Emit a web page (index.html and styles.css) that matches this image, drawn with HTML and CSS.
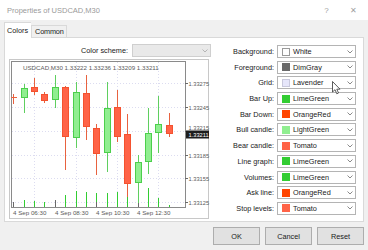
FILE: index.html
```html
<!DOCTYPE html>
<html>
<head>
<meta charset="utf-8">
<link rel="stylesheet" href="styles.css">
</head>
<body>
<div class="titlebar">
  <span class="title">Properties of USDCAD,M30</span>
  <span class="tb-btn">?</span>
  <span class="tb-btn">✕</span>
</div>
<div class="tabs">
  <div class="tab active">Colors</div>
  <div class="tab">Common</div>
</div>
<div class="panel">
  <div class="left">
    <div class="scheme-row">
      <span>Color scheme:</span>
      <div class="combo disabled"><svg class="chev" width="6" height="4" viewBox="0 0 6 4"><polyline points="0.5,0.5 3,3 5.5,0.5" fill="none" stroke="#b5b5b5" stroke-width="1"/></svg></div>
    </div>
    <svg class="chart" viewBox="9 59 201 160" width="201" height="160">
      <rect x="9.5" y="59.5" width="199" height="159" fill="#fff" stroke="#c8c8c8"/>
      <g stroke="#dcdcf0" stroke-dasharray="1 2" stroke-width="1">
        <line x1="12" y1="83.5" x2="185" y2="83.5"/>
        <line x1="12" y1="107.5" x2="185" y2="107.5"/>
        <line x1="12" y1="131.5" x2="185" y2="131.5"/>
        <line x1="12" y1="155.5" x2="185" y2="155.5"/>
        <line x1="12" y1="178.5" x2="185" y2="178.5"/>
        <line x1="12" y1="202.5" x2="185" y2="202.5"/>
        <line x1="34.5" y1="62" x2="34.5" y2="207"/>
        <line x1="76.5" y1="62" x2="76.5" y2="207"/>
        <line x1="117.5" y1="62" x2="117.5" y2="207"/>
        <line x1="158.5" y1="62" x2="158.5" y2="207"/>
      </g>
      <rect x="11.5" y="61.5" width="174" height="146" fill="none" stroke="#8a8a8a"/>
      <text class="ctitle" x="23" y="70">USDCAD,M30  1.33222 1.33236 1.33209 1.33211</text>
      <g stroke="#32cd32" stroke-width="1">
        <line x1="13.5" y1="202" x2="13.5" y2="207"/>
        <line x1="24.5" y1="200" x2="24.5" y2="207"/>
        <line x1="34.5" y1="201" x2="34.5" y2="207"/>
        <line x1="44.5" y1="202" x2="44.5" y2="207"/>
        <line x1="55.5" y1="200" x2="55.5" y2="207"/>
        <line x1="65.5" y1="195" x2="65.5" y2="207"/>
        <line x1="76.5" y1="191" x2="76.5" y2="207"/>
        <line x1="86.5" y1="192" x2="86.5" y2="207"/>
        <line x1="96.5" y1="193" x2="96.5" y2="207"/>
        <line x1="107.5" y1="193" x2="107.5" y2="207"/>
        <line x1="117.5" y1="192" x2="117.5" y2="207"/>
        <line x1="127.5" y1="187" x2="127.5" y2="207"/>
        <line x1="138.5" y1="188" x2="138.5" y2="207"/>
        <line x1="148.5" y1="188" x2="148.5" y2="207"/>
        <line x1="158.5" y1="198" x2="158.5" y2="207"/>
        <line x1="169.5" y1="205" x2="169.5" y2="207"/>
      </g>
      <g stroke="#696969" stroke-width="1">
        <line x1="13.5" y1="202" x2="13.5" y2="207"/>
        <line x1="55.5" y1="200" x2="55.5" y2="207"/>
        <line x1="96.5" y1="202" x2="96.5" y2="207"/>
        <line x1="138.5" y1="202" x2="138.5" y2="207"/>
        <line x1="185" y1="83.5" x2="188" y2="83.5"/>
        <line x1="185" y1="107.5" x2="188" y2="107.5"/>
        <line x1="185" y1="131.5" x2="188" y2="131.5"/>
        <line x1="185" y1="155.5" x2="188" y2="155.5"/>
        <line x1="185" y1="178.5" x2="188" y2="178.5"/>
        <line x1="185" y1="202.5" x2="188" y2="202.5"/>
      </g>
      <g stroke="#e8623f" stroke-width="1">
        <line x1="13.5" y1="94" x2="13.5" y2="104"/>
        <line x1="11" y1="97.5" x2="17" y2="97.5"/>
        <line x1="34.5" y1="78" x2="34.5" y2="95"/>
        <line x1="44.5" y1="92" x2="44.5" y2="103"/>
        <line x1="65.5" y1="86" x2="65.5" y2="170"/>
        <line x1="86.5" y1="75" x2="86.5" y2="140"/>
        <line x1="96.5" y1="124" x2="96.5" y2="175"/>
        <line x1="117.5" y1="90" x2="117.5" y2="142"/>
        <line x1="127.5" y1="114" x2="127.5" y2="197"/>
        <line x1="169.5" y1="113" x2="169.5" y2="137"/>
      </g>
      <g stroke="#5fcf5f" stroke-width="1">
        <line x1="24.5" y1="84" x2="24.5" y2="113"/>
        <line x1="55.5" y1="75" x2="55.5" y2="108"/>
        <line x1="76.5" y1="82" x2="76.5" y2="148"/>
        <line x1="107.5" y1="82" x2="107.5" y2="172"/>
        <line x1="138.5" y1="155" x2="138.5" y2="203"/>
        <line x1="148.5" y1="108" x2="148.5" y2="174"/>
        <line x1="158.5" y1="96" x2="158.5" y2="153"/>
      </g>
      <g fill="#90ee90" stroke="#4ccf4c" stroke-width="1">
        <rect x="21.5" y="88.5" width="6" height="9"/>
        <rect x="52.5" y="87.5" width="6" height="12"/>
        <rect x="73.5" y="92.5" width="6" height="45"/>
        <rect x="104.5" y="108.5" width="6" height="44"/>
        <rect x="135.5" y="162.5" width="6" height="20"/>
        <rect x="145.5" y="133.5" width="6" height="28"/>
        <rect x="155.5" y="124.5" width="6" height="8"/>
      </g>
      <g fill="#ff6347" stroke="#f4522f" stroke-width="1">
        <rect x="31.5" y="87.5" width="6" height="4"/>
        <rect x="41.5" y="94.5" width="6" height="6"/>
        <rect x="62.5" y="87.5" width="6" height="49"/>
        <rect x="83.5" y="93.5" width="6" height="33"/>
        <rect x="93.5" y="128.5" width="6" height="25"/>
        <rect x="114.5" y="107.5" width="6" height="29"/>
        <rect x="124.5" y="134.5" width="6" height="49"/>
        <rect x="166.5" y="125.5" width="6" height="8"/>
      </g>
      <g class="axis">
        <text class="price" x="188.5" y="85.5">1.33275</text>
        <text class="price" x="188.5" y="109.5">1.33245</text>
        <text class="price" x="188.5" y="129.8">1.33215</text>
        <text class="price" x="188.5" y="157.5">1.33185</text>
        <text class="price" x="188.5" y="180.5">1.33155</text>
        <text class="price" x="188.5" y="204.5">1.33125</text>
        <text x="13" y="214.5">4 Sep 06:30</text>
        <text x="55" y="214.5">4 Sep 08:30</text>
        <text x="96" y="214.5">4 Sep 10:30</text>
        <text x="137" y="214.5">4 Sep 12:30</text>
      </g>
      <rect x="186" y="130.5" width="23" height="8" fill="#1e1e1e"/>
      <text class="price pbox" x="188.5" y="136.8">1.33211</text>
    </svg>
  </div>
  <div class="form">
    <span class="lbl">Background:</span>
    <div class="combo"><span class="sw sw-white"></span><span class="ct">White</span><svg class="chev" width="6" height="4" viewBox="0 0 6 4"><polyline points="0.5,0.5 3,3 5.5,0.5" fill="none" stroke="#8a8a8a"/></svg></div>
    <span class="lbl">Foreground:</span>
    <div class="combo"><span class="sw sw-dimgray"></span><span class="ct">DimGray</span><svg class="chev" width="6" height="4" viewBox="0 0 6 4"><polyline points="0.5,0.5 3,3 5.5,0.5" fill="none" stroke="#8a8a8a"/></svg></div>
    <span class="lbl">Grid:</span>
    <div class="combo"><span class="sw sw-lavender"></span><span class="ct">Lavender</span><svg class="chev" width="6" height="4" viewBox="0 0 6 4"><polyline points="0.5,0.5 3,3 5.5,0.5" fill="none" stroke="#8a8a8a"/></svg></div>
    <span class="lbl">Bar Up:</span>
    <div class="combo"><span class="sw sw-limegreen"></span><span class="ct">LimeGreen</span><svg class="chev" width="6" height="4" viewBox="0 0 6 4"><polyline points="0.5,0.5 3,3 5.5,0.5" fill="none" stroke="#8a8a8a"/></svg></div>
    <span class="lbl">Bar Down:</span>
    <div class="combo"><span class="sw sw-orangered"></span><span class="ct">OrangeRed</span><svg class="chev" width="6" height="4" viewBox="0 0 6 4"><polyline points="0.5,0.5 3,3 5.5,0.5" fill="none" stroke="#8a8a8a"/></svg></div>
    <span class="lbl">Bull candle:</span>
    <div class="combo"><span class="sw sw-lightgreen"></span><span class="ct">LightGreen</span><svg class="chev" width="6" height="4" viewBox="0 0 6 4"><polyline points="0.5,0.5 3,3 5.5,0.5" fill="none" stroke="#8a8a8a"/></svg></div>
    <span class="lbl">Bear candle:</span>
    <div class="combo"><span class="sw sw-tomato"></span><span class="ct">Tomato</span><svg class="chev" width="6" height="4" viewBox="0 0 6 4"><polyline points="0.5,0.5 3,3 5.5,0.5" fill="none" stroke="#8a8a8a"/></svg></div>
    <span class="lbl">Line graph:</span>
    <div class="combo"><span class="sw sw-limegreen"></span><span class="ct">LimeGreen</span><svg class="chev" width="6" height="4" viewBox="0 0 6 4"><polyline points="0.5,0.5 3,3 5.5,0.5" fill="none" stroke="#8a8a8a"/></svg></div>
    <span class="lbl">Volumes:</span>
    <div class="combo"><span class="sw sw-limegreen"></span><span class="ct">LimeGreen</span><svg class="chev" width="6" height="4" viewBox="0 0 6 4"><polyline points="0.5,0.5 3,3 5.5,0.5" fill="none" stroke="#8a8a8a"/></svg></div>
    <span class="lbl">Ask line:</span>
    <div class="combo"><span class="sw sw-orangered"></span><span class="ct">OrangeRed</span><svg class="chev" width="6" height="4" viewBox="0 0 6 4"><polyline points="0.5,0.5 3,3 5.5,0.5" fill="none" stroke="#8a8a8a"/></svg></div>
    <span class="lbl">Stop levels:</span>
    <div class="combo"><span class="sw sw-tomato"></span><span class="ct">Tomato</span><svg class="chev" width="6" height="4" viewBox="0 0 6 4"><polyline points="0.5,0.5 3,3 5.5,0.5" fill="none" stroke="#8a8a8a"/></svg></div>
  </div>
</div>
<div class="buttons">
  <button class="btn">OK</button>
  <button class="btn">Cancel</button>
  <button class="btn">Reset</button>
</div>
<svg class="cursor" width="10" height="14" viewBox="0 0 10 14"><path d="M0.5 0.5 L0.5 11 L3 8.7 L4.8 12.8 L6.5 12 L4.8 8.2 L8 8.2 Z" fill="#fff" stroke="#333" stroke-width="0.8"/></svg>
</body>
</html>
```

FILE: styles.css
```css
* { box-sizing: border-box; }
html, body { margin: 0; padding: 0; }
body {
  width: 368px;
  height: 250px;
  overflow: hidden;
  position: relative;
  background: #f0f0f0;
  font-family: "Liberation Sans", Arial, sans-serif;
  font-size: 7.3px;
  color: #1a1a1a;
}
.titlebar {
  height: 20px;
  background: #fff;
  display: flex;
  align-items: center;
  padding: 1px 1px 0 7px;
}
.title { flex: 1; color: #9a9a9a; font-size: 7.5px; }
.tb-btn { width: 27px; text-align: center; color: #a0a0a0; font-size: 8px; }
.tabs {
  height: 18px;
  display: flex;
  align-items: flex-end;
  padding-left: 4px;
  position: relative;
  z-index: 1;
  margin-bottom: -1px;
}
.tab {
  height: 12px;
  margin-bottom: 1px;
  padding: 0 2px 0 3px;
  border: 1px solid #d9d9d9;
  border-bottom: 0;
  background: #f0f0f0;
  display: flex;
  align-items: center;
  white-space: nowrap;
  letter-spacing: -0.2px;
}
.tab.active {
  height: 16px;
  margin-bottom: 0;
  background: #fff;
  padding: 0 3px 0 2px;
  border-right: 0;
  letter-spacing: 0;
}
.panel {
  height: 185px;
  margin: 0 4px;
  background: #fff;
  border: 1px solid #d9d9d9;
  display: flex;
}
.left { width: 208px; }
.scheme-row {
  height: 13px;
  margin-top: 6px;
  padding-right: 2px;
  display: flex;
  justify-content: flex-end;
  align-items: center;
  gap: 4px;
}
.combo {
  width: 79px;
  height: 13px;
  background: #fff;
  border: 1px solid #b4b4b4;
  display: flex;
  align-items: center;
}
.combo.disabled { background: #e9e9e9; border-color: #cfcfcf; }
.chev { margin-left: auto; margin-right: 2px; display: block; }
.chart { display: block; margin: 2px 0 0 4px; }
.chart text { font-family: "Liberation Sans", Arial, sans-serif; font-size: 6.2px; fill: #5a5a5a; }
.chart .price { font-size: 5.7px; }
.chart .pbox { fill: #fff; }
.form {
  flex: 1;
  display: grid;
  grid-template-columns: 1fr 79px;
  grid-auto-rows: 13px;
  column-gap: 3px;
  row-gap: 2.7px;
  padding: 7px 7px 0 0;
  align-content: start;
}
.lbl { text-align: right; line-height: 13px; white-space: nowrap; }
.sw { width: 8px; height: 8px; margin-left: 4px; flex: none; }
.sw-white { background: #fff; border: 1px solid #9a9a9a; }
.sw-dimgray { background: #696969; }
.sw-lavender { background: #e6e6fa; border: 1px solid #c8c8dc; }
.sw-limegreen { background: #32cd32; }
.sw-orangered { background: #ff4500; }
.sw-lightgreen { background: #90ee90; }
.sw-tomato { background: #ff6347; }
.ct { margin-left: 3px; white-space: nowrap; }
.buttons {
  margin-top: 5px;
  padding-right: 4px;
  display: flex;
  justify-content: flex-end;
  gap: 5px;
}
.btn {
  width: 47px;
  height: 18px;
  padding: 0;
  background: #e1e1e1;
  border: 1px solid #adadad;
  font-family: inherit;
  font-size: 7.3px;
  color: #1a1a1a;
}
.cursor { position: absolute; left: 332px; top: 81px; }
```
